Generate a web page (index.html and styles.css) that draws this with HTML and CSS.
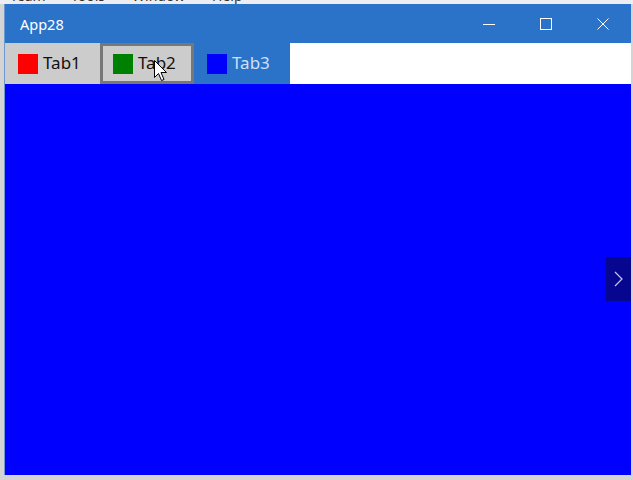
FILE: index.html
```html
<!DOCTYPE html>
<html lang="en">
<head>
    <meta charset="UTF-8">
    <title>App28</title>
    <link rel="stylesheet" href="styles.css">
</head>
<body>
    <div class="desk-menu">
        <span class="desk-item">Team</span>
        <span class="desk-item">Tools</span>
        <span class="desk-item">Window</span>
        <span class="desk-item">Help</span>
    </div>

    <div class="window">
        <div class="titlebar">
            <span class="title">App28</span>
            <div class="caption-buttons">
                <div class="cap-btn">
                    <svg width="12" height="12" viewBox="0 0 12 12"><path d="M0 6.5h12" stroke="#fff" stroke-width="1"/></svg>
                </div>
                <div class="cap-btn">
                    <svg width="12" height="12" viewBox="0 0 12 12"><rect x="0.5" y="0.5" width="11" height="11" fill="none" stroke="#fff" stroke-width="1"/></svg>
                </div>
                <div class="cap-btn">
                    <svg width="12" height="12" viewBox="0 0 12 12"><path d="M0.5 0.5l11 11M11.5 0.5l-11 11" stroke="#fff" stroke-width="1"/></svg>
                </div>
            </div>
        </div>

        <div class="tabbar">
            <div class="tab">
                <span class="swatch red"></span>
                <span class="tab-label">Tab1</span>
            </div>
            <div class="tab focused">
                <span class="swatch green"></span>
                <span class="tab-label">Tab2</span>
                <svg class="cursor" width="14" height="22" viewBox="0 0 14 22">
                    <path d="M0.5 0.5v17l4-4 3 7 2.5-1-3-7h5.5z" fill="#fff" stroke="#000" stroke-width="1"/>
                </svg>
            </div>
            <div class="tab selected">
                <span class="swatch blue"></span>
                <span class="tab-label">Tab3</span>
            </div>
        </div>

        <div class="content">
            <div class="next-btn">
                <svg width="9" height="16" viewBox="0 0 9 16"><path d="M1 1l7 7-7 7" fill="none" stroke="#c8c8f0" stroke-width="1.2"/></svg>
            </div>
        </div>
    </div>
</body>
</html>
```

FILE: styles.css
```css
body {
    margin: 0;
    background-color: #d4d4d4;
    font-family: "Noto Sans", "Open Sans", sans-serif;
    width: 633px;
    height: 480px;
    overflow: hidden;
}

.desk-menu {
    height: 4px;
    overflow: hidden;
    display: flex;
    gap: 0;
    padding-left: 10px;
    background-color: #eeeef2;
}

.desk-item {
    display: block;
    margin-top: -13px;
    font-size: 14px;
    line-height: 17px;
    color: #333;
    width: 61px;
}

.desk-item:nth-child(3) {
    width: 80px;
}

.window {
    margin-left: 4px;
    width: 627px;
    height: 471px;
    display: flex;
    flex-direction: column;
    border-left: 1px solid #6b98d0;
    box-sizing: border-box;
    background-color: #fff;
}

.titlebar {
    height: 39px;
    background-color: #2a73c9;
    display: flex;
    align-items: center;
    justify-content: space-between;
    flex-shrink: 0;
}

.title {
    color: #fff;
    font-size: 14.5px;
    padding-left: 15px;
}

.caption-buttons {
    display: flex;
    height: 100%;
    margin-right: 0;
}

.cap-btn {
    width: 57px;
    height: 100%;
    display: flex;
    align-items: center;
    justify-content: center;
}

.tabbar {
    height: 41px;
    display: flex;
    background-color: #fff;
    flex-shrink: 0;
}

.tab {
    display: flex;
    align-items: center;
    gap: 5px;
    background-color: #cccccc;
    box-sizing: border-box;
    padding-left: 13px;
    position: relative;
}

.tab:nth-child(1) {
    width: 95px;
}

.tab.focused {
    width: 94px;
    border: 3px solid #777777;
    padding-left: 10px;
}

.tab.selected {
    width: 96px;
    background-color: #2a73c9;
}

.swatch {
    width: 20px;
    height: 20px;
    display: block;
    flex-shrink: 0;
}

.red { background-color: #ff0000; }
.green { background-color: #008000; }
.blue { background-color: #0000ff; }

.tab-label {
    font-size: 17px;
    color: #111;
    position: relative;
    top: -1px;
}

.selected .tab-label {
    color: #cfe0f6;
}

.cursor {
    position: absolute;
    left: 51px;
    top: 14px;
}

.content {
    flex: 1;
    background-color: #0000ff;
    position: relative;
}

.next-btn {
    position: absolute;
    right: 0;
    top: 173px;
    width: 25px;
    height: 44px;
    background-color: #06068f;
    display: flex;
    align-items: center;
    justify-content: center;
}
```
